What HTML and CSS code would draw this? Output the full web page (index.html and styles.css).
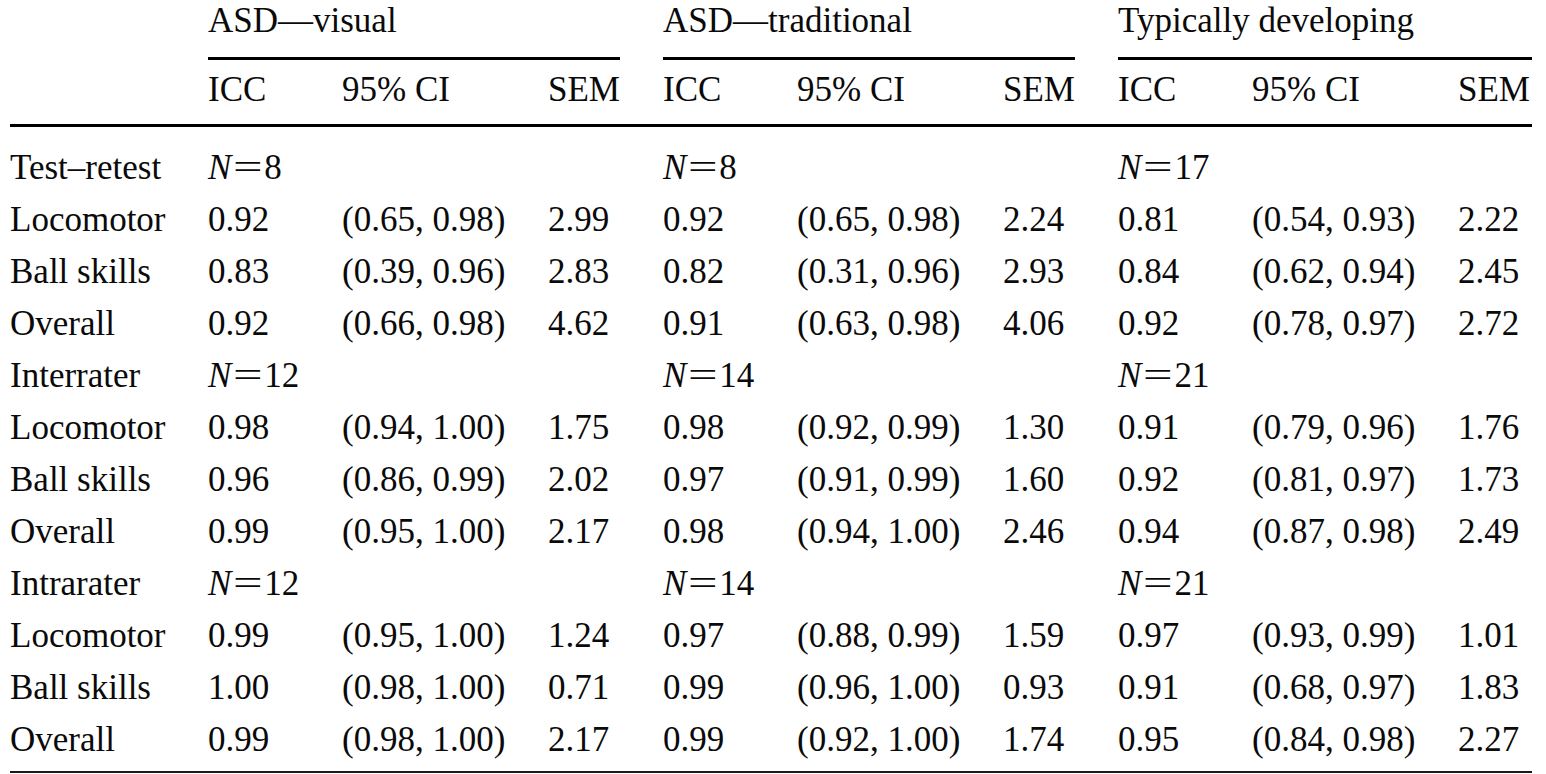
FILE: index.html
```html
<!DOCTYPE html>
<html lang="en">
<head>
<meta charset="utf-8">
<title>ICC table</title>
<link rel="stylesheet" href="styles.css">
</head>
<body>
<table class="icc">
  <colgroup>
    <col class="c-label">
    <col class="c-icc"><col class="c-ci"><col class="c-sem"><col class="c-gap">
    <col class="c-icc"><col class="c-ci"><col class="c-sem"><col class="c-gap">
    <col class="c-icc"><col class="c-ci"><col class="c-sem-last">
  </colgroup>
  <thead>
    <tr class="r-group">
      <th></th>
      <th colspan="3" class="grp">ASD—visual</th>
      <th></th>
      <th colspan="3" class="grp">ASD—traditional</th>
      <th></th>
      <th colspan="3" class="grp">Typically developing</th>
    </tr>
    <tr class="r-sub">
      <th></th>
      <th>ICC</th><th>95% CI</th><th>SEM</th><th></th>
      <th>ICC</th><th>95% CI</th><th>SEM</th><th></th>
      <th>ICC</th><th>95% CI</th><th>SEM</th>
    </tr>
  </thead>
  <tbody>
    <tr class="first">
      <td>Test–retest</td>
      <td><i>N</i><span class="eq"><span>=</span></span>8</td><td></td><td></td><td></td>
      <td><i>N</i><span class="eq"><span>=</span></span>8</td><td></td><td></td><td></td>
      <td><i>N</i><span class="eq"><span>=</span></span>17</td><td></td><td></td>
    </tr>
    <tr>
      <td>Locomotor</td>
      <td>0.92</td><td>(0.65, 0.98)</td><td>2.99</td><td></td>
      <td>0.92</td><td>(0.65, 0.98)</td><td>2.24</td><td></td>
      <td>0.81</td><td>(0.54, 0.93)</td><td>2.22</td>
    </tr>
    <tr>
      <td>Ball skills</td>
      <td>0.83</td><td>(0.39, 0.96)</td><td>2.83</td><td></td>
      <td>0.82</td><td>(0.31, 0.96)</td><td>2.93</td><td></td>
      <td>0.84</td><td>(0.62, 0.94)</td><td>2.45</td>
    </tr>
    <tr>
      <td>Overall</td>
      <td>0.92</td><td>(0.66, 0.98)</td><td>4.62</td><td></td>
      <td>0.91</td><td>(0.63, 0.98)</td><td>4.06</td><td></td>
      <td>0.92</td><td>(0.78, 0.97)</td><td>2.72</td>
    </tr>
    <tr>
      <td>Interrater</td>
      <td><i>N</i><span class="eq"><span>=</span></span>12</td><td></td><td></td><td></td>
      <td><i>N</i><span class="eq"><span>=</span></span>14</td><td></td><td></td><td></td>
      <td><i>N</i><span class="eq"><span>=</span></span>21</td><td></td><td></td>
    </tr>
    <tr>
      <td>Locomotor</td>
      <td>0.98</td><td>(0.94, 1.00)</td><td>1.75</td><td></td>
      <td>0.98</td><td>(0.92, 0.99)</td><td>1.30</td><td></td>
      <td>0.91</td><td>(0.79, 0.96)</td><td>1.76</td>
    </tr>
    <tr>
      <td>Ball skills</td>
      <td>0.96</td><td>(0.86, 0.99)</td><td>2.02</td><td></td>
      <td>0.97</td><td>(0.91, 0.99)</td><td>1.60</td><td></td>
      <td>0.92</td><td>(0.81, 0.97)</td><td>1.73</td>
    </tr>
    <tr>
      <td>Overall</td>
      <td>0.99</td><td>(0.95, 1.00)</td><td>2.17</td><td></td>
      <td>0.98</td><td>(0.94, 1.00)</td><td>2.46</td><td></td>
      <td>0.94</td><td>(0.87, 0.98)</td><td>2.49</td>
    </tr>
    <tr>
      <td>Intrarater</td>
      <td><i>N</i><span class="eq"><span>=</span></span>12</td><td></td><td></td><td></td>
      <td><i>N</i><span class="eq"><span>=</span></span>14</td><td></td><td></td><td></td>
      <td><i>N</i><span class="eq"><span>=</span></span>21</td><td></td><td></td>
    </tr>
    <tr>
      <td>Locomotor</td>
      <td>0.99</td><td>(0.95, 1.00)</td><td>1.24</td><td></td>
      <td>0.97</td><td>(0.88, 0.99)</td><td>1.59</td><td></td>
      <td>0.97</td><td>(0.93, 0.99)</td><td>1.01</td>
    </tr>
    <tr>
      <td>Ball skills</td>
      <td>1.00</td><td>(0.98, 1.00)</td><td>0.71</td><td></td>
      <td>0.99</td><td>(0.96, 1.00)</td><td>0.93</td><td></td>
      <td>0.91</td><td>(0.68, 0.97)</td><td>1.83</td>
    </tr>
    <tr class="last">
      <td>Overall</td>
      <td>0.99</td><td>(0.98, 1.00)</td><td>2.17</td><td></td>
      <td>0.99</td><td>(0.92, 1.00)</td><td>1.74</td><td></td>
      <td>0.95</td><td>(0.84, 0.98)</td><td>2.27</td>
    </tr>
  </tbody>
</table>
</body>
</html>
```

FILE: styles.css
```css
html, body {
  margin: 0;
  padding: 0;
  background: #ffffff;
}

body {
  font-family: "Liberation Serif", "Times New Roman", serif;
  font-size: 35px;
  color: #0a0a0a;
}

.icc {
  margin-left: 10px;
  width: 1522px;
  table-layout: fixed;
  border-collapse: separate;
  border-spacing: 0;
}

.c-label { width: 198px; }
.c-icc { width: 134px; }
.c-ci { width: 206px; }
.c-sem { width: 72px; }
.c-gap { width: 43px; }
.c-sem-last { width: 74px; }

.icc th,
.icc td {
  padding: 0;
  text-align: left;
  font-weight: normal;
  white-space: nowrap;
  line-height: 52px;
  vertical-align: top;
}

.r-group th {
  line-height: 42px;
  padding-bottom: 15px;
}

.r-group th.grp {
  border-bottom: 3px solid #000;
}

.r-sub th {
  padding-top: 4px;
  padding-bottom: 8px;
  border-bottom: 3px solid #000;
}

.first td {
  padding-top: 15px;
}

.last td {
  padding-bottom: 5px;
  border-bottom: 2px solid #1a1a1a;
}

.icc i {
  font-style: italic;
}

.eq {
  display: inline-block;
  width: 33px;
  text-align: center;
}

.eq span {
  display: inline-block;
  transform: scaleX(1.5);
}
```
